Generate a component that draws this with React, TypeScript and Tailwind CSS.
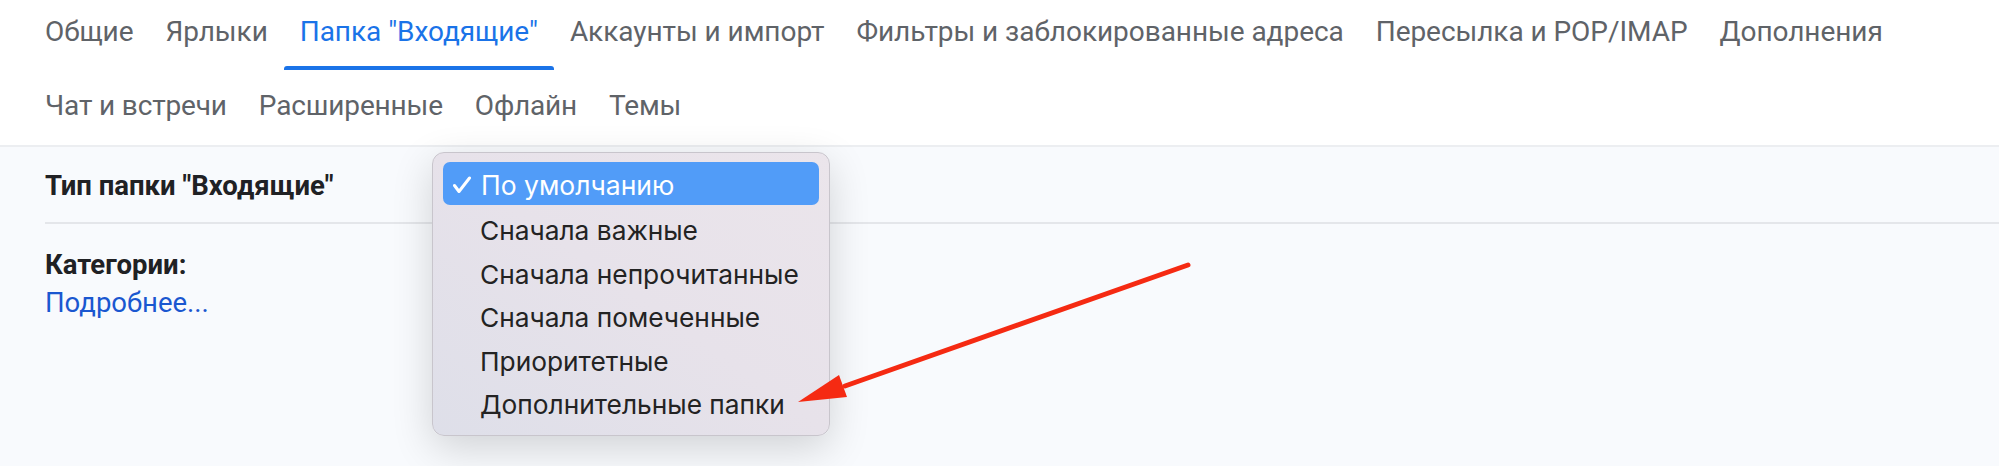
import React from 'react';

const topTabs = [
  'Общие',
  'Ярлыки',
  'Папка "Входящие"',
  'Аккаунты и импорт',
  'Фильтры и заблокированные адреса',
  'Пересылка и POP/IMAP',
  'Дополнения',
];

const bottomTabs = ['Чат и встречи', 'Расширенные', 'Офлайн', 'Темы'];

const options = [
  'Сначала важные',
  'Сначала непрочитанные',
  'Сначала помеченные',
  'Приоритетные',
  'Дополнительные папки',
];

// Native-looking select popup (macOS style)
const SelectMenu = () => (
  <div className="absolute left-[432px] top-[152px] w-[398px] h-[284px] rounded-[12px] border border-[#c8c5cc] bg-gradient-to-tr from-[#dedfe9] via-[#e7e2ea] to-[#ebe5eb] shadow-[0_12px_40px_rgba(0,0,0,0.16)] px-[10px] pt-[9px] font-['Inter',sans-serif]">
    <div className="flex items-center h-[43px] rounded-[7px] bg-[#519cf8] text-white text-[26.5px] pl-[9px] pt-[5px]">
      <svg width="20" height="18" viewBox="0 0 20 18" className="mr-[9px] -mt-[3px]">
        <path d="M2.5 9.5 L7 15.5 L17.5 2" fill="none" stroke="white" strokeWidth="3" strokeLinecap="round" strokeLinejoin="round" />
      </svg>
      <span>По умолчанию</span>
    </div>
    <ul className="text-[26.3px] text-[#232323] pt-[4px]">
      {options.map((opt) => (
        <li key={opt} className="h-[43.6px] flex items-center pl-[37px]">
          {opt}
        </li>
      ))}
    </ul>
  </div>
);

// Red annotation arrow
const Arrow = () => (
  <svg className="absolute left-0 top-0 pointer-events-none" width="1999" height="466">
    <line x1="1188" y1="265" x2="845" y2="386" stroke="#f52a12" strokeWidth="5" strokeLinecap="round" />
    <polygon points="798,402 839,375 847,397" fill="#f52a12" />
  </svg>
);

const App = () => {
  return (
    <div className="relative w-full h-[466px] overflow-hidden bg-[#f8fafd]">
      {/* Settings tabs */}
      <div className="bg-white border-b-2 border-[#eceef1] font-['Roboto',sans-serif] text-[28px] text-[#5f6368]">
        <div className="flex pl-[29px] h-[70px] tracking-[-0.05px]">
          {topTabs.map((tab, i) => (
            <div key={tab} className="relative px-[16px] flex items-center pb-[6px]">
              <span className={i === 2 ? 'text-[#1a73e8]' : ''}>{tab}</span>
              {i === 2 && (
                <span className="absolute left-0 right-0 bottom-0 h-[4px] rounded-t-[3px] bg-[#1a73e8]" />
              )}
            </div>
          ))}
        </div>
        <div className="flex pl-[29px] h-[75px] items-center pb-[4px] tracking-[-0.15px]">
          {bottomTabs.map((tab) => (
            <div key={tab} className="px-[16px]">
              {tab}
            </div>
          ))}
        </div>
      </div>

      {/* Inbox settings */}
      <div className="pl-[45px] font-['Roboto',sans-serif] text-[27.5px] text-[#202124]">
        <div className="h-[77px] border-b-2 border-[#e4e6ea] flex items-center pt-[3px] font-bold">
          Тип папки "Входящие"
        </div>
        <div className="pt-[22px] leading-[38px]">
          <div className="font-bold">Категории:</div>
          <div className="text-[#1a57d0]">Подробнее...</div>
        </div>
      </div>

      <SelectMenu />
      <Arrow />
    </div>
  );
};

export default App;
